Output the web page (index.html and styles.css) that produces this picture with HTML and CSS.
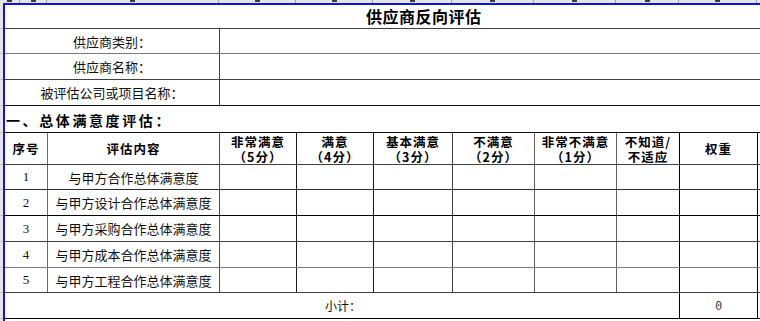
FILE: index.html
```html
<!DOCTYPE html>
<html lang="zh-CN">
<head>
<meta charset="utf-8">
<title>供应商反向评估</title>
<link rel="stylesheet" href="styles.css">
</head>
<body>
<div class="sheet">
  <div class="colhdr">
    <span class="ch w20"><i></i></span>
    <span class="ch w27"><i></i></span>
    <span class="ch w172"><i></i></span>
    <span class="ch w77"><i></i></span>
    <span class="ch w77"><i></i></span>
    <span class="ch w79"><i></i></span>
    <span class="ch w82"><i></i></span>
    <span class="ch w82"><i></i></span>
    <span class="ch w63"><i></i></span>
    <span class="ch w78"><i></i></span>
    <span class="ch w100"><i></i></span>
  </div>
  <div class="main">
    <div class="rowhdr">
      <span class="rh h24"></span>
      <span class="rh h25"></span>
      <span class="rh h26"></span>
      <span class="rh h26"></span>
      <span class="rh h27"></span>
      <span class="rh h32"></span>
      <span class="rh h25"></span>
      <span class="rh h26"></span>
      <span class="rh h26"></span>
      <span class="rh h26"></span>
      <span class="rh h25"></span>
      <span class="rh h26"></span>
      <span class="rh h26"></span>
    </div>
    <div class="grid">
      <div class="row title">供应商反向评估</div>
      <div class="row info r1"><div class="lbl">供应商类别：</div><div class="val"></div></div>
      <div class="row info r2"><div class="lbl">供应商名称：</div><div class="val"></div></div>
      <div class="row info r3"><div class="lbl">被评估公司或项目名称：</div><div class="val"></div></div>
      <div class="row section">一、总体满意度评估：</div>
      <div class="row data head">
        <div class="c">序号</div>
        <div class="c">评估内容</div>
        <div class="c">非常满意<br>（5分）</div>
        <div class="c">满意<br>（4分）</div>
        <div class="c">基本满意<br>（3分）</div>
        <div class="c">不满意<br>（2分）</div>
        <div class="c">非常不满意<br>（1分）</div>
        <div class="c">不知道/<br>不适应</div>
        <div class="c">权重</div>
        <div class="c"></div>
      </div>
      <div class="row data d1">
        <div class="c num">1</div><div class="c">与甲方合作总体满意度</div>
        <div class="c"></div><div class="c"></div><div class="c"></div><div class="c"></div><div class="c"></div><div class="c"></div><div class="c"></div><div class="c"></div>
      </div>
      <div class="row data d2">
        <div class="c num">2</div><div class="c">与甲方设计合作总体满意度</div>
        <div class="c"></div><div class="c"></div><div class="c"></div><div class="c"></div><div class="c"></div><div class="c"></div><div class="c"></div><div class="c"></div>
      </div>
      <div class="row data d3">
        <div class="c num">3</div><div class="c">与甲方采购合作总体满意度</div>
        <div class="c"></div><div class="c"></div><div class="c"></div><div class="c"></div><div class="c"></div><div class="c"></div><div class="c"></div><div class="c"></div>
      </div>
      <div class="row data d4">
        <div class="c num">4</div><div class="c">与甲方成本合作总体满意度</div>
        <div class="c"></div><div class="c"></div><div class="c"></div><div class="c"></div><div class="c"></div><div class="c"></div><div class="c"></div><div class="c"></div>
      </div>
      <div class="row data d5">
        <div class="c num">5</div><div class="c">与甲方工程合作总体满意度</div>
        <div class="c"></div><div class="c"></div><div class="c"></div><div class="c"></div><div class="c"></div><div class="c"></div><div class="c"></div><div class="c"></div>
      </div>
      <div class="row total">
        <div class="c">小计：</div>
        <div class="c num">0</div>
        <div class="c"></div>
      </div>
      <div class="row blank"></div>
    </div>
  </div>
</div>
</body>
</html>
```

FILE: styles.css
```css
html, body {
  margin: 0;
  padding: 0;
  background: #ffffff;
}

body {
  font-family: "Noto Sans CJK SC", "Noto Sans", sans-serif;
  color: #111111;
  overflow: hidden;
}

.sheet {
  width: 760px;
  height: 321px;
  overflow: hidden;
}

/* spreadsheet column header strip (mostly cut off) */
.colhdr {
  height: 3px;
  background: #e4e4e4;
  display: flex;
  overflow: hidden;
}

.ch {
  flex: none;
  box-sizing: border-box;
  height: 3px;
  border-right: 1px solid #9a9a9a;
  display: flex;
  justify-content: center;
  align-items: flex-start;
}

.ch i {
  display: block;
  width: 5px;
  height: 2px;
  background: #3a3a3a;
}

.w20 { width: 20px; }
.w27 { width: 27px; }
.w172 { width: 172px; }
.w77 { width: 77px; }
.w79 { width: 79px; }
.w82 { width: 82px; }
.w63 { width: 63px; }
.w78 { width: 78px; }
.w100 { width: 100px; }

.main {
  display: flex;
}

/* spreadsheet row header strip */
.rowhdr {
  width: 3px;
  flex: none;
  background: #e4e4e4;
  display: flex;
  flex-direction: column;
}

.rh {
  box-sizing: border-box;
  border-bottom: 1px solid #c4c4c4;
}

.h24 { height: 26px; }
.h25 { height: 25px; }
.h26 { height: 26px; }
.h27 { height: 27px; }
.h32 { height: 32px; }

/* sheet area with selection border */
.grid {
  flex: none;
  width: 860px;
  border-top: 2px solid #1212dc;
  border-left: 2px solid #1212dc;
}

.row {
  box-sizing: border-box;
  border-bottom: 1px solid #404040;
}

.title {
  height: 24px;
  padding-left: 361px;
  font-size: 16px;
  font-weight: bold;
  letter-spacing: 0.5px;
  line-height: 23px;
  color: #000;
}

.info {
  display: grid;
  grid-template-columns: 215px 1fr;
  font-size: 13px;
}

.r1 { height: 25px; border-bottom-color: #7c7c7c; }
.r2 { height: 26px; border-bottom-color: #404040; }
.r3 { height: 26px; border-bottom-color: #101010; }

.lbl {
  box-sizing: border-box;
  border-right: 1px solid #404040;
  display: flex;
  align-items: center;
  justify-content: center;
}

.section {
  height: 27px;
  border-bottom-color: #101010;
  padding-left: 1px;
  padding-top: 2px;
  font-size: 14px;
  font-weight: bold;
  letter-spacing: 2.6px;
  line-height: 24px;
  color: #000;
}

.data {
  display: grid;
  grid-template-columns: 43px 172px 77px 77px 79px 82px 82px 63px 78px 100px;
  font-size: 13px;
}

.c {
  box-sizing: border-box;
  border-right: 1px solid #404040;
  display: flex;
  align-items: center;
  justify-content: center;
  text-align: center;
}

.data .c:nth-child(1) { border-right-color: #6a6a6a; }
.data .c:nth-child(2) { border-right-color: #505050; }
.data .c:nth-child(3) { border-right-color: #1a1a1a; }
.data .c:nth-child(4) { border-right-color: #1a1a1a; }
.data .c:nth-child(5) { border-right-color: #404040; }
.data .c:nth-child(6) { border-right-color: #606060; }
.data .c:nth-child(7) { border-right-color: #606060; }
.data .c:nth-child(8) { border-right-color: #000000; }
.data .c:nth-child(9) { border-right-color: #000000; }
.data .c:nth-child(10) { border-right: 0; }

.head {
  height: 32px;
  border-bottom-color: #404040;
  font-weight: bold;
  font-size: 12.5px;
  letter-spacing: 1px;
  line-height: 15px;
  color: #000;
}

.d1 { height: 25px; border-bottom-color: #303030; }
.d2 { height: 26px; border-bottom-color: #000000; }
.d3 { height: 26px; border-bottom-color: #404040; }
.d4 { height: 26px; border-bottom-color: #7c7c7c; }
.d5 { height: 25px; border-bottom-color: #404040; }

.num {
  font-family: "Liberation Serif", "DejaVu Serif", serif;
  font-size: 13px;
}

.total {
  height: 26px;
  border-bottom-color: #000000;
  display: grid;
  grid-template-columns: 675px 78px 100px;
  font-size: 12px;
}

.total .c:nth-child(1) { border-right-color: #000; padding-left: 2px; }
.total .c:nth-child(2) { border-right-color: #000; color: #444; font-family: "DejaVu Sans Mono", monospace; font-size: 12px; }
.total .c:nth-child(3) { border-right: 0; }

.blank {
  height: 26px;
  border-bottom: 0;
}
```
